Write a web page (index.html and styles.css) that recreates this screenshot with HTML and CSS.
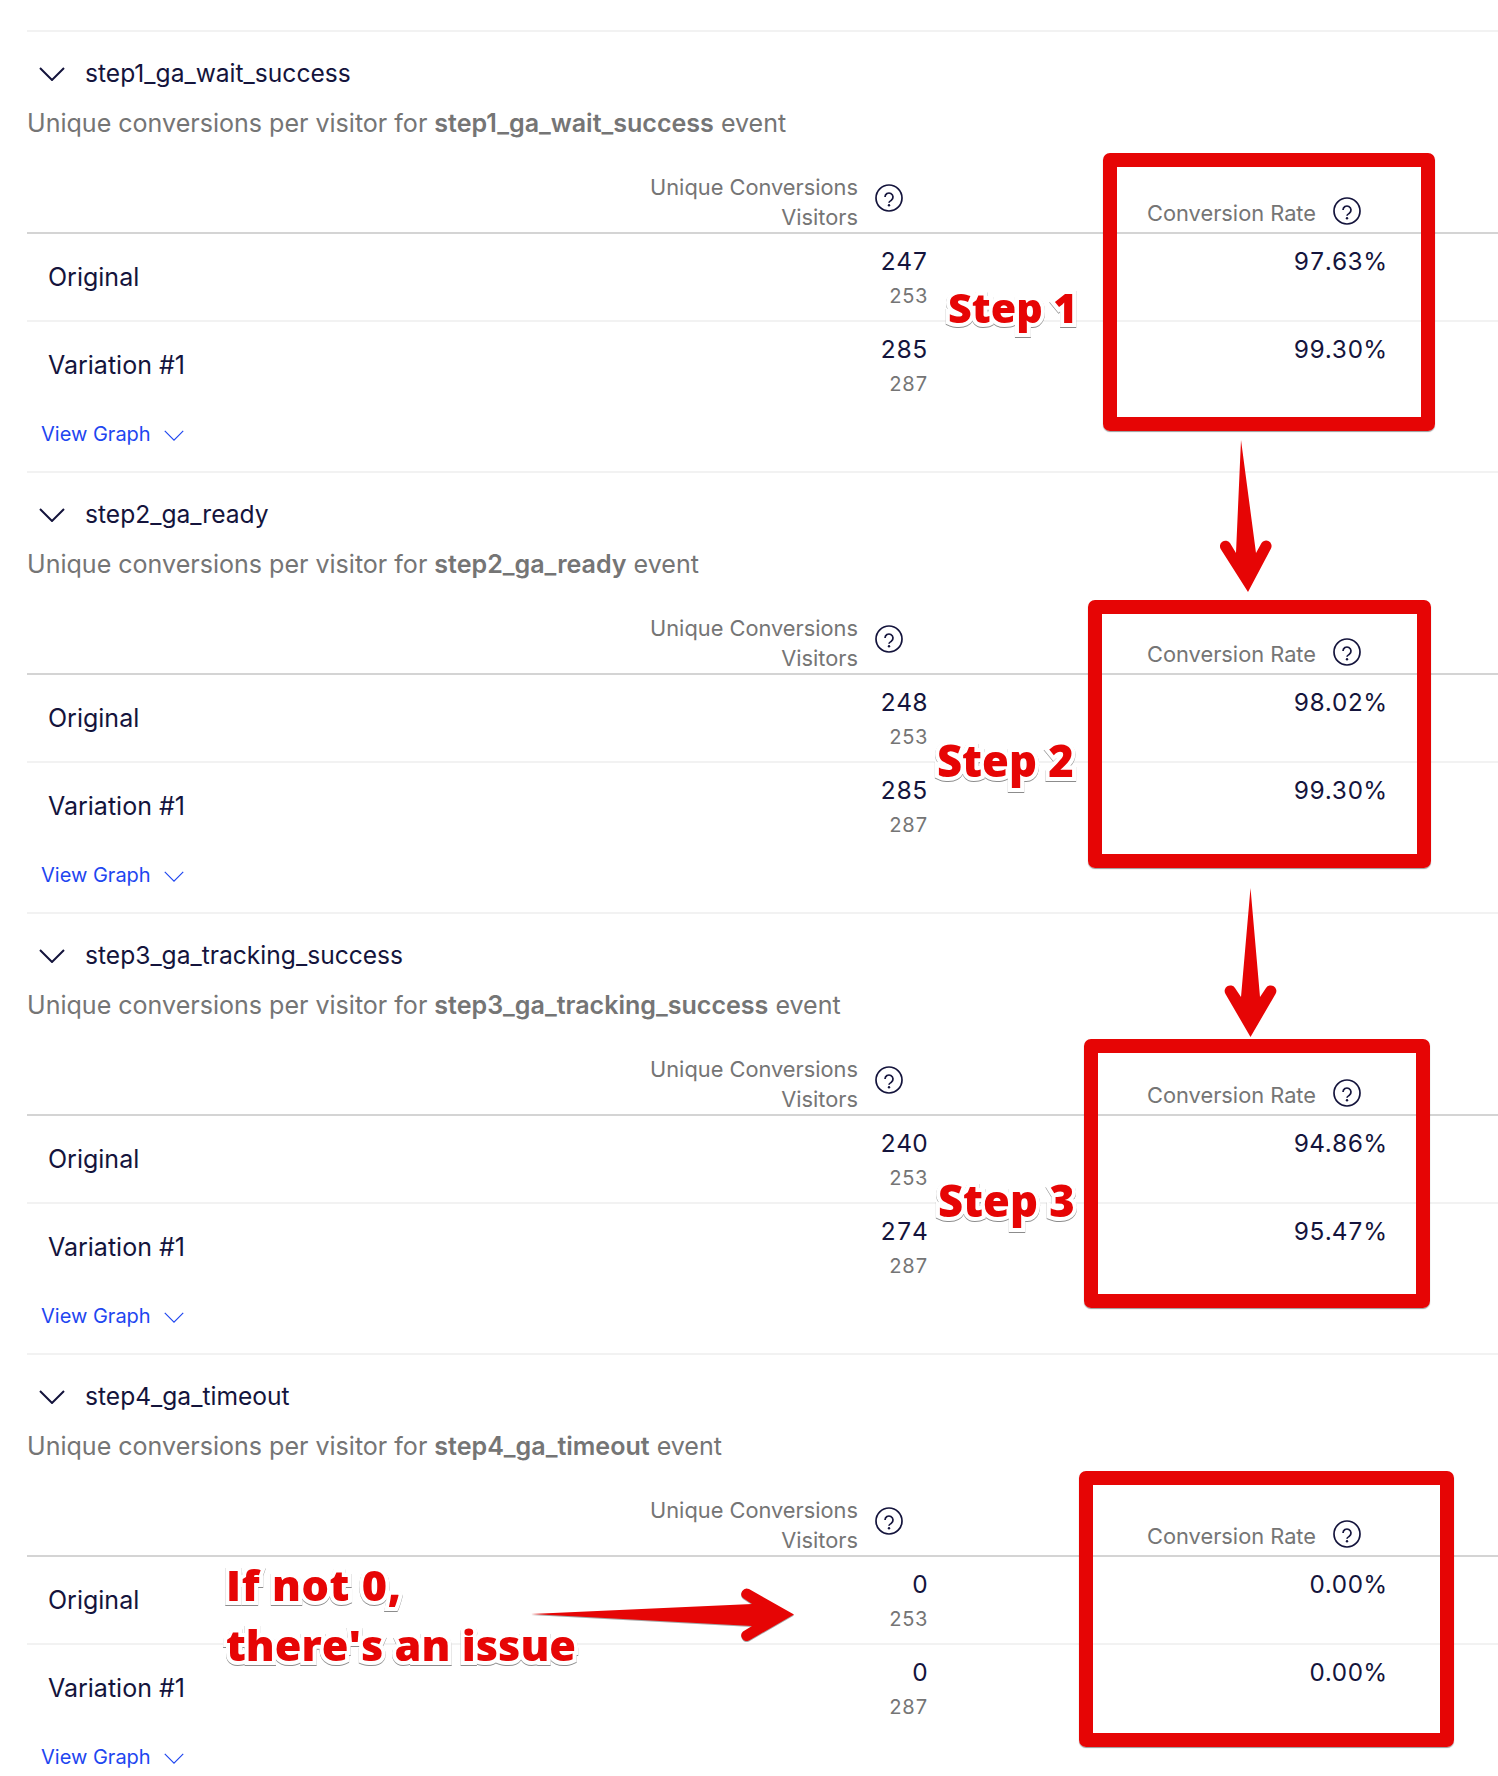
FILE: index.html
```html
<!DOCTYPE html>
<html lang="en">
<head>
    <meta charset="UTF-8">
    <meta name="viewport" content="width=device-width, initial-scale=1.0">
    <title>Funnel results</title>
    <link rel="stylesheet" href="styles.css">
</head>
<body>
    <svg class="defs" width="0" height="0">
        <symbol id="help" viewBox="0 0 28 28">
            <circle cx="14" cy="14" r="13" fill="none" stroke="currentColor" stroke-width="1.7"/>
            <path d="M10 13a4 4 0 1 1 6.300 3.300c-1.400.9-2.300 1.300-2.300 2.500" fill="none" stroke="currentColor" stroke-width="1.700"/>
            <circle cx="14" cy="21.300" r="1.200" fill="currentColor"/>
        </symbol>
        <symbol id="chevron" viewBox="0 0 26 14">
            <path d="M1 1l12 12L25 1" fill="none" stroke="currentColor"/>
        </symbol>
    </svg>

    <div class="page">
        <!-- Step 1 -->
        <section class="metric">
            <div class="metric-title">
                <svg class="chevron"><use href="#chevron"/></svg>
                <span>step1_ga_wait_success</span>
            </div>
            <p class="metric-desc">Unique conversions per visitor for <b>step1_ga_wait_success</b> event</p>
            <div class="row row-head">
                <div></div>
                <div class="head-cell">
                    <div class="head-label">Unique Conversions<br>Visitors</div>
                    <svg class="help"><use href="#help"/></svg>
                </div>
                <div class="head-cell head-rate">
                    <div class="head-label">Conversion Rate</div>
                    <svg class="help"><use href="#help"/></svg>
                </div>
            </div>
            <div class="row">
                <div class="name">Original</div>
                <div class="count">247<small>253</small></div>
                <div class="rate">97.63%</div>
            </div>
            <div class="row">
                <div class="name">Variation #1</div>
                <div class="count">285<small>287</small></div>
                <div class="rate">99.30%</div>
            </div>
            <a class="graph-link">View Graph <svg class="chevron-small"><use href="#chevron"/></svg></a>
        </section>

        <!-- Step 2 -->
        <section class="metric">
            <div class="metric-title">
                <svg class="chevron"><use href="#chevron"/></svg>
                <span>step2_ga_ready</span>
            </div>
            <p class="metric-desc">Unique conversions per visitor for <b>step2_ga_ready</b> event</p>
            <div class="row row-head">
                <div></div>
                <div class="head-cell">
                    <div class="head-label">Unique Conversions<br>Visitors</div>
                    <svg class="help"><use href="#help"/></svg>
                </div>
                <div class="head-cell head-rate">
                    <div class="head-label">Conversion Rate</div>
                    <svg class="help"><use href="#help"/></svg>
                </div>
            </div>
            <div class="row">
                <div class="name">Original</div>
                <div class="count">248<small>253</small></div>
                <div class="rate">98.02%</div>
            </div>
            <div class="row">
                <div class="name">Variation #1</div>
                <div class="count">285<small>287</small></div>
                <div class="rate">99.30%</div>
            </div>
            <a class="graph-link">View Graph <svg class="chevron-small"><use href="#chevron"/></svg></a>
        </section>

        <!-- Step 3 -->
        <section class="metric">
            <div class="metric-title">
                <svg class="chevron"><use href="#chevron"/></svg>
                <span>step3_ga_tracking_success</span>
            </div>
            <p class="metric-desc">Unique conversions per visitor for <b>step3_ga_tracking_success</b> event</p>
            <div class="row row-head">
                <div></div>
                <div class="head-cell">
                    <div class="head-label">Unique Conversions<br>Visitors</div>
                    <svg class="help"><use href="#help"/></svg>
                </div>
                <div class="head-cell head-rate">
                    <div class="head-label">Conversion Rate</div>
                    <svg class="help"><use href="#help"/></svg>
                </div>
            </div>
            <div class="row">
                <div class="name">Original</div>
                <div class="count">240<small>253</small></div>
                <div class="rate">94.86%</div>
            </div>
            <div class="row">
                <div class="name">Variation #1</div>
                <div class="count">274<small>287</small></div>
                <div class="rate">95.47%</div>
            </div>
            <a class="graph-link">View Graph <svg class="chevron-small"><use href="#chevron"/></svg></a>
        </section>

        <!-- Step 4 -->
        <section class="metric">
            <div class="metric-title">
                <svg class="chevron"><use href="#chevron"/></svg>
                <span>step4_ga_timeout</span>
            </div>
            <p class="metric-desc">Unique conversions per visitor for <b>step4_ga_timeout</b> event</p>
            <div class="row row-head">
                <div></div>
                <div class="head-cell">
                    <div class="head-label">Unique Conversions<br>Visitors</div>
                    <svg class="help"><use href="#help"/></svg>
                </div>
                <div class="head-cell head-rate">
                    <div class="head-label">Conversion Rate</div>
                    <svg class="help"><use href="#help"/></svg>
                </div>
            </div>
            <div class="row">
                <div class="name">Original</div>
                <div class="count">0<small>253</small></div>
                <div class="rate">0.00%</div>
            </div>
            <div class="row">
                <div class="name">Variation #1</div>
                <div class="count">0<small>287</small></div>
                <div class="rate">0.00%</div>
            </div>
            <a class="graph-link">View Graph <svg class="chevron-small"><use href="#chevron"/></svg></a>
        </section>

        <!-- Red annotations drawn over the screenshot -->
        <div class="red-box box-1"></div>
        <div class="red-box box-2"></div>
        <div class="red-box box-3"></div>
        <div class="red-box box-4"></div>

        <svg class="arrows" viewBox="0 0 1498 1776">
            <path class="arrow" d="M1241 440L1256 553L1261.500 543A5.500 5.500 0 0 1 1271 548.500L1248 592L1221 549.500A5.500 5.500 0 0 1 1230 543L1236 553Z"/>
            <path class="arrow" d="M1250.500 888L1260 997L1266 988A5.500 5.500 0 0 1 1275.500 994L1250.500 1037L1225.500 994A5.500 5.500 0 0 1 1235 988L1241 997Z"/>
            <path class="arrow arrow-side" d="M531 1614L752 1604L743 1598A5.500 5.500 0 0 1 749 1589L794 1614.500L749 1640.500A5.500 5.500 0 0 1 743 1631.500L752 1626Z"/>
        </svg>

        <div class="note step-1">Step 1</div>
        <div class="note step-2">Step 2</div>
        <div class="note step-3">Step 3</div>
        <div class="note issue"><span class="issue-first">If not 0,</span><br>there's an issue</div>
    </div>
</body>
</html>
```

FILE: styles.css
```css
/* General Styles */
html, body {
    margin: 0;
}

body {
    font-family: 'Inter', 'Liberation Sans', sans-serif;
    color: #14143c;
    background: white;
}

.defs {
    position: absolute;
}

.page {
    position: relative;
    height: 1776px;
    padding: 30px 0 0 27px;
    box-sizing: border-box;
    overflow: hidden;
}

/* Metric Section */
.metric {
    border-top: 2px solid #f2f2f2;
    height: 441px;
    box-sizing: border-box;
}

.metric-title {
    display: flex;
    align-items: center;
    gap: 20px;
    padding: 26px 0 0 12px;
    font-size: 24.600px;
    line-height: 31px;
}

.chevron {
    width: 26px;
    height: 14px;
    stroke-width: 2px;
}

.metric-desc {
    margin: 18px 0 0;
    font-size: 25.050px;
    line-height: 32px;
    color: #757575;
}

.metric-desc b {
    font-weight: 600;
}

/* Table Rows */
.row {
    display: grid;
    grid-template-columns: 700px 200px 459px;
    border-bottom: 2px solid #f2f2f2;
    height: 88px;
    box-sizing: border-box;
}

.row:last-of-type {
    border-bottom: none;
}

.row:last-of-type .name {
    margin-bottom: 2px;
}

.row-head {
    height: 62px;
    margin-top: 33px;
    border-bottom-color: #d4d4d4;
}

.head-cell {
    display: flex;
    justify-content: flex-end;
    align-items: flex-start;
    gap: 17px;
    padding-right: 24px;
}

.head-label {
    font-size: 21.800px;
    line-height: 30px;
    color: #757575;
    text-align: right;
    white-space: nowrap;
}

.help {
    width: 28px;
    height: 28px;
    margin-top: 12px;
    flex: none;
}

.head-rate {
    padding-right: 25px;
}

.head-rate .head-label {
    margin-top: 26px;
}

.head-rate .help {
    margin-top: 25px;
}

.name {
    padding-left: 21px;
    align-self: center;
    font-size: 25px;
}

.count {
    padding-top: 11px;
    margin-right: -1px;
    text-align: right;
    font-size: 24.500px;
    line-height: 32px;
    font-variant-numeric: tabular-nums;
}

.count small {
    display: block;
    margin-top: 3px;
    font-size: 20px;
    color: #757575;
}

.rate {
    padding-top: 11px;
    margin-right: -1px;
    text-align: right;
    font-size: 24.300px;
    line-height: 32px;
    font-variant-numeric: tabular-nums;
}

/* View Graph */
.graph-link {
    display: flex;
    align-items: center;
    gap: 13px;
    margin-top: 10px;
    padding-left: 14px;
    font-size: 20px;
    line-height: 28px;
    color: #1e46f0;
}

.chevron-small {
    width: 20px;
    height: 11px;
    margin-top: 3px;
    stroke-width: 1.500px;
}

/* Annotations */
.red-box {
    position: absolute;
    box-sizing: border-box;
    border: 14px solid #e60505;
    border-radius: 7px;
    box-shadow: 0 1px 1px rgba(0, 0, 0, 0.4);
}

.box-1 {
    left: 1103px;
    top: 153px;
    width: 332px;
    height: 278px;
}

.box-2 {
    left: 1088px;
    top: 600px;
    width: 343px;
    height: 268px;
}

.box-3 {
    left: 1084px;
    top: 1039px;
    width: 346px;
    height: 269px;
}

.box-4 {
    left: 1079px;
    top: 1471px;
    width: 375px;
    height: 276px;
}

.arrows {
    position: absolute;
    left: 0;
    top: 0;
    width: 1498px;
    height: 1776px;
}

.arrow {
    fill: #e60505;
}

.arrow-side {
    filter: drop-shadow(0 1px 0.5px rgba(0, 0, 0, 0.35));
}

.note {
    position: absolute;
    font-family: 'Open Sans', sans-serif;
    font-weight: 800;
    font-size: 43.500px;
    line-height: 60px;
    color: #e60505;
    white-space: nowrap;
    -webkit-text-stroke: 8px white;
    paint-order: stroke fill;
    filter: drop-shadow(0 1px 0.5px rgba(0, 0, 0, 0.45));
}

.step-1 {
    left: 948px;
    top: 277px;
    font-size: 41.200px;
}

.step-2 {
    left: 937px;
    top: 731px;
}

.step-3 {
    left: 938px;
    top: 1171px;
}

.issue {
    left: 226px;
    top: 1555px;
    font-size: 43.200px;
}

.issue-first {
    letter-spacing: 0.600px;
}
```
